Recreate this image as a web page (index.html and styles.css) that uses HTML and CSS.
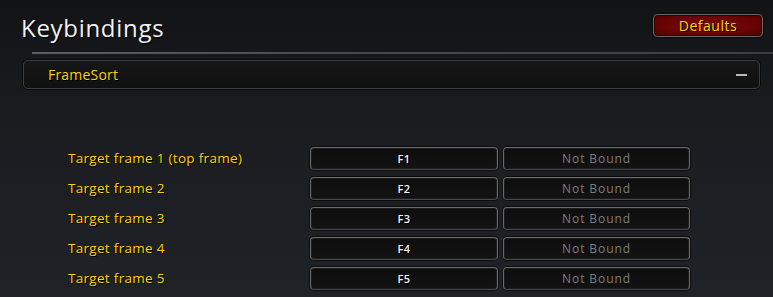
FILE: index.html
```html
<!DOCTYPE html>
<html>
<head>
<meta charset="utf-8">
<link rel="stylesheet" href="styles.css">
</head>
<body>
<div class="panel">
  <header class="header">
    <h1 class="title">Keybindings</h1>
    <button class="defaults">Defaults</button>
  </header>
  <div class="sep"></div>
  <div class="section">
    <span class="section-name">FrameSort</span>
    <span class="minus"></span>
  </div>
  <div class="rows">
    <div class="row"><span class="label">Target frame 1 (top frame)</span><span class="key bound">F1</span><span class="key">Not Bound</span></div>
    <div class="row"><span class="label">Target frame 2</span><span class="key bound">F2</span><span class="key">Not Bound</span></div>
    <div class="row"><span class="label">Target frame 3</span><span class="key bound">F3</span><span class="key">Not Bound</span></div>
    <div class="row"><span class="label">Target frame 4</span><span class="key bound">F4</span><span class="key">Not Bound</span></div>
    <div class="row"><span class="label">Target frame 5</span><span class="key bound">F5</span><span class="key">Not Bound</span></div>
  </div>
</div>
</body>
</html>
```
FILE: styles.css
```css
html, body {
  margin: 0;
  padding: 0;
}
body {
  width: 773px;
  height: 297px;
  overflow: hidden;
  background: linear-gradient(180deg, #111315 0px, #1a1c20 120px, #1f2226 297px);
  font-family: "Open Sans", "DejaVu Sans", sans-serif;
}
.panel {
  display: flex;
  flex-direction: column;
}
.header {
  height: 52px;
  display: flex;
  justify-content: space-between;
  align-items: flex-start;
}
.title {
  margin: 12px 0 0 21px;
  font-size: 24px;
  font-weight: 400;
  line-height: 32px;
  color: #f2f2f2;
  letter-spacing: 0.7px;
  text-shadow: 1px 1px 1px #000;
}
.defaults {
  margin: 14px 10px 0 0;
  width: 110px;
  height: 23px;
  padding: 0;
  border: 1px solid #6a6a6a;
  border-radius: 4px;
  box-shadow: 0 0 0 1px #0b0b0b, inset 0 0 0 1px #2a0000;
  background: radial-gradient(ellipse at center, #7e0a06 0%, #640303 70%, #4a0000 100%);
  color: #ffd100;
  font-family: "Open Sans", "DejaVu Sans", sans-serif;
  font-size: 14px;
  line-height: 20px;
  letter-spacing: 0.5px;
  text-shadow: 1px 1px 0 #000;
}
.sep {
  height: 2px;
  margin-left: 32px;
  background: linear-gradient(90deg, #5c5f63 0px, #46494d 300px, #3a3d41 773px);
}
.section {
  margin: 6px 13px 0 23px;
  height: 27px;
  border: 1px solid #3e3f41;
  border-radius: 5px;
  box-shadow: 0 0 0 1px #0a0a0a;
  background: linear-gradient(180deg, #161616 0%, #101010 100%);
  display: flex;
  align-items: center;
  justify-content: space-between;
  padding: 0 12px 0 24px;
}
.section-name {
  color: #ffd100;
  font-size: 14px;
  letter-spacing: 0.2px;
  text-shadow: 1px 1px 0 #000;
}
.minus {
  width: 11px;
  height: 2px;
  background: #b9b9b9;
  margin-top: 1px;
}
.rows {
  margin-top: 55px;
  display: flex;
  flex-direction: column;
}
.row {
  height: 30px;
  display: flex;
  align-items: flex-start;
}
.label {
  width: 242px;
  margin-left: 68px;
  margin-top: 5px;
  color: #ffd100;
  font-size: 13.5px;
  line-height: 18px;
  letter-spacing: 0.3px;
  text-shadow: 1px 1px 0 #000;
}
.key {
  margin-top: 3px;
  width: 186px;
  height: 21px;
  border: 1px solid #6c6c6c;
  border-bottom-color: #4a4a4a;
  border-radius: 4px;
  box-shadow: 0 0 0 1px #0c0c0c, inset 0 0 0 1px #1c1c1c;
  background: linear-gradient(180deg, #0d0d0e 0%, #131314 100%);
  display: flex;
  align-items: center;
  justify-content: center;
  color: #7d7d7d;
  font-size: 12px;
  letter-spacing: 0.9px;
}
.key + .key {
  margin-left: 5px;
  width: 185px;
}
.key.bound {
  color: #f4f4f4;
  font-size: 11px;
  font-weight: 600;
  letter-spacing: 0.5px;
  text-shadow: 1px 1px 0 #000;
}
```
